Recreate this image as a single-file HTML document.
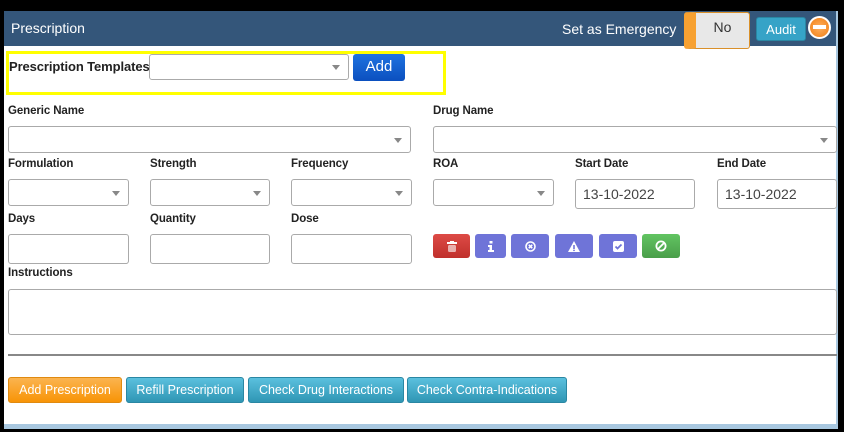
<!DOCTYPE html>
<html><head><meta charset="utf-8"><style>
*{box-sizing:border-box;margin:0;padding:0}
body{width:844px;height:432px;background:#000;position:relative;overflow:hidden;font-family:"Liberation Sans",sans-serif}
.a{position:absolute}
#panel{left:4px;top:11px;width:834px;height:418px;background:#fff;border-right:2px solid #a9c8e0;border-bottom:5px solid #a9c8e0}
#hdr{left:4px;top:11px;width:832px;height:35px;background:#34567a;color:#fff}
.lbl{font-size:11.5px;font-weight:bold;color:#222;letter-spacing:-0.1px}
.sel,.inp{border:1px solid #aaa;border-radius:3px;background:#fff}
.sel:after{content:"";position:absolute;right:8px;top:50%;margin-top:-2px;border-left:4px solid transparent;border-right:4px solid transparent;border-top:5px solid #888}
.inp{font-size:14px;color:#444;padding:6px 0 0 7px}
.ib{top:234px;height:24px;border-radius:3px;background:#6f74d8;display:flex;align-items:center;justify-content:center}
.bb{top:377px;height:26px;border-radius:3px;color:#fff;font-size:12.5px;display:flex;align-items:center;justify-content:center;background:linear-gradient(#5bc0de,#2f96b4);border:1px solid #2a87a3}
</style></head><body>
<div id="panel" class="a"></div>
<div id="hdr" class="a">
<div class="a" style="left:7px;top:9px;font-size:14px">Prescription</div>
<div class="a" style="left:558px;top:10px;font-size:14px">Set as Emergency</div>
<div class="a" style="left:680px;top:1px;width:66px;height:37px;background:#e8e8e8;border:1px solid #d9902a;border-radius:3px;border-left:12px solid #f7a131;color:#333;font-size:14px;text-align:center;padding-top:6px">No</div>
<div class="a" style="left:752px;top:6px;width:50px;height:24px;background:#36a3c7;border:1px solid #2a87a3;border-radius:3px;font-size:13px;text-align:center;padding-top:4px">Audit</div>
<div class="a" style="left:804px;top:5px;width:23px;height:23px;border-radius:50%;background:radial-gradient(#ffb060,#f07d10);border:2px solid #fff"><div class="a" style="left:3px;top:7px;width:13px;height:4px;background:#fff"></div></div>
</div>
<div class="a" style="left:6px;top:51px;width:440px;height:44px;border:3px solid #ffff00"></div>
<div class="a lbl" style="left:9px;top:59px;font-size:13px;letter-spacing:-0.1px">Prescription Templates</div>
<div class="a sel" style="left:149px;top:54px;width:200px;height:26px"></div>
<div class="a" style="left:353px;top:54px;width:52px;height:27px;background:linear-gradient(#1f73e0,#0b4fbf);border-radius:3px;color:#fff;font-size:15px;text-align:center;padding-top:4px">Add</div>

<div class="a lbl" style="left:8px;top:105px">Generic Name</div>
<div class="a lbl" style="left:433px;top:105px">Drug Name</div>
<div class="a sel" style="left:8px;top:126px;width:403px;height:27px"></div>
<div class="a sel" style="left:433px;top:126px;width:404px;height:27px"></div>

<div class="a lbl" style="left:8px;top:158px">Formulation</div>
<div class="a lbl" style="left:150px;top:158px">Strength</div>
<div class="a lbl" style="left:291px;top:158px">Frequency</div>
<div class="a lbl" style="left:433px;top:158px">ROA</div>
<div class="a lbl" style="left:575px;top:158px">Start Date</div>
<div class="a lbl" style="left:717px;top:158px">End Date</div>
<div class="a sel" style="left:8px;top:179px;width:121px;height:27px"></div>
<div class="a sel" style="left:150px;top:179px;width:120px;height:27px"></div>
<div class="a sel" style="left:291px;top:179px;width:121px;height:27px"></div>
<div class="a sel" style="left:433px;top:179px;width:121px;height:27px"></div>
<div class="a inp" style="left:575px;top:179px;width:120px;height:30px">13-10-2022</div>
<div class="a inp" style="left:717px;top:179px;width:120px;height:30px">13-10-2022</div>

<div class="a lbl" style="left:8px;top:213px">Days</div>
<div class="a lbl" style="left:150px;top:213px">Quantity</div>
<div class="a lbl" style="left:291px;top:213px">Dose</div>
<div class="a inp" style="left:8px;top:234px;width:121px;height:30px"></div>
<div class="a inp" style="left:150px;top:234px;width:120px;height:30px"></div>
<div class="a inp" style="left:291px;top:234px;width:121px;height:30px"></div>

<div class="a ib" style="left:433px;width:37px;background:linear-gradient(#dd4b46,#c0302c)"><svg width="10" height="11" viewBox="0 0 10 11"><rect x="0" y="1" width="10" height="2" fill="#fff"/><rect x="3" y="0" width="4" height="1" fill="#fff"/><path d="M1 4h8v7H1z M3 5v5M5 5v5M7 5v5" fill="#fff" stroke="#c73a35" stroke-width="0.8"/></svg></div>
<div class="a ib" style="left:475px;width:31px"><svg width="6" height="11"><rect x="1.5" y="0" width="3" height="2.5" fill="#fff"/><path d="M0 4h4v5h2v2H0V9h1.5V6H0z" fill="#fff"/></svg></div>
<div class="a ib" style="left:511px;width:38px"><svg width="11" height="11"><circle cx="5.5" cy="5.5" r="4.5" fill="none" stroke="#fff" stroke-width="1.6"/><path d="M3.8 3.8l3.4 3.4M7.2 3.8l-3.4 3.4" stroke="#fff" stroke-width="1.6"/></svg></div>
<div class="a ib" style="left:555px;width:38px"><svg width="12" height="11"><path d="M6 0L12 11H0z" fill="#fff"/><rect x="5.2" y="4" width="1.6" height="4" fill="#6f74d8"/><rect x="5.2" y="8.7" width="1.6" height="1.4" fill="#6f74d8"/></svg></div>
<div class="a ib" style="left:599px;width:38px"><svg width="11" height="11"><rect width="11" height="11" rx="2" fill="#fff"/><path d="M2.5 5.5l2 2 4-4" stroke="#6f74d8" stroke-width="1.8" fill="none"/></svg></div>
<div class="a ib" style="left:642px;width:38px;background:linear-gradient(#62c462,#4a9e4a)"><svg width="12" height="12"><circle cx="6" cy="6" r="4.6" fill="none" stroke="#fff" stroke-width="1.8"/><path d="M3 9L9 3" stroke="#fff" stroke-width="1.8"/></svg></div>

<div class="a lbl" style="left:8px;top:267px">Instructions</div>
<div class="a inp" style="left:8px;top:289px;width:829px;height:46px"></div>
<div class="a" style="left:8px;top:354px;width:829px;height:2px;background:#888"></div>

<div class="a bb" style="left:8px;width:114px;background:linear-gradient(#fbb450,#f89406);border-color:#e08a10">Add Prescription</div>
<div class="a bb" style="left:126px;width:118px">Refill Prescription</div>
<div class="a bb" style="left:248px;width:156px">Check Drug Interactions</div>
<div class="a bb" style="left:407px;width:160px">Check Contra-Indications</div>
</body></html>
